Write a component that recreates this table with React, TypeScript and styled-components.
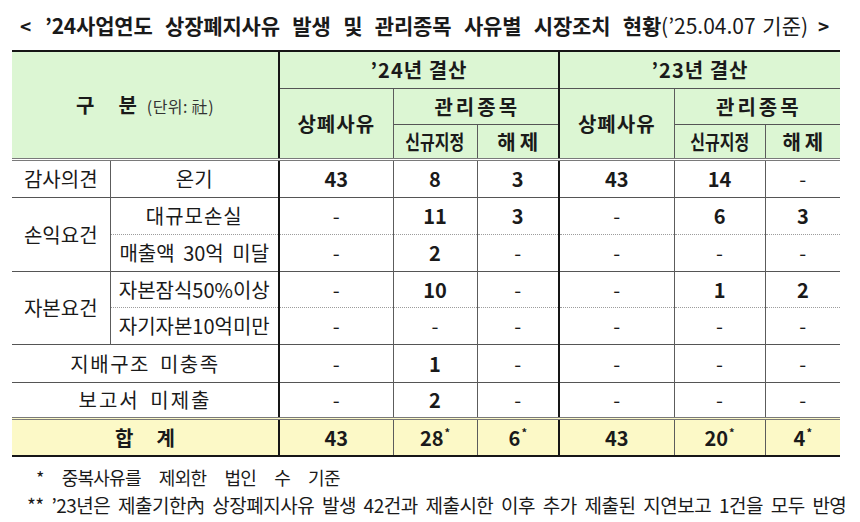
import styled, { createGlobalStyle } from "styled-components";

type Edge = "thick" | "thin" | "none";
type Line = "solid" | "dotted" | "double" | "none";

const edges: Record<Edge, string> = {
    thick: "2px solid #161616",
    thin: "1px solid #5c5c5c",
    none: "none",
};

const lines: Record<Line, string> = {
    solid: "1px solid #555555",
    dotted: "1px dotted #9c9c9c",
    double: "3px double #7a7a7a",
    none: "none",
};

const GlobalStyle = createGlobalStyle`
    html, body {
        margin: 0;
        padding: 0;
        background: #ffffff;
    }
    body {
        font-family: "Noto Sans CJK KR", "Noto Sans", sans-serif;
        color: #1a1a1a;
    }
`;

const Page = styled.div`
    width: 860px;
    height: 522px;
    box-sizing: border-box;
    padding-left: 12px;
    overflow: hidden;
`;

const Title = styled.h1`
    margin: 0;
    height: 50px;
    display: flex;
    align-items: center;
    padding-left: 8px;
    font-size: 21px;
    font-weight: 700;
    letter-spacing: -0.2px;
    word-spacing: 8px;
    white-space: nowrap;
    color: #1a1a1a;
`;

const TitleNote = styled.span`
    font-weight: 400;
    letter-spacing: 0;
    word-spacing: 2px;
`;

const Arrow = styled.span<{ $side: "left" | "right" }>`
    font-weight: 700;
    font-size: 19px;
    margin: ${p => (p.$side === "left" ? "0 14px 0 0" : "0 0 0 10px")};
`;

const Table = styled.table`
    width: 828px;
    border-collapse: collapse;
    table-layout: fixed;
    border-top: 2px solid #161616;
    border-bottom: 2px solid #161616;
`;

const Row = styled.tr<{ $h: number }>`
    height: ${p => p.$h}px;
`;

const HeadCell = styled.th<{ $left?: Edge; $top?: Line }>`
    padding: 0;
    background: #dcf6d3;
    font-size: 20px;
    font-weight: 700;
    text-align: center;
    vertical-align: middle;
    letter-spacing: 1px;
    white-space: nowrap;
    border-left: ${p => edges[p.$left ?? "none"]};
    border-top: ${p => lines[p.$top ?? "none"]};
    border-bottom: none;
`;

const Unit = styled.span`
    font-size: 16px;
    font-weight: 400;
    letter-spacing: 0.4px;
    color: #333333;
    margin-left: 10px;
`;

const Spaced = styled.span<{ $gap: number }>`
    display: inline-flex;
    gap: ${p => p.$gap}px;
    letter-spacing: 0;
`;

const Spread = styled.span<{ $gap: number }>`
    letter-spacing: ${p => p.$gap}px;
    margin-right: -${p => p.$gap}px;
`;

const Narrow = styled.span`
    display: inline-block;
    letter-spacing: 0;
    transform: scaleX(0.8);
`;

const BodyCell = styled.td<{ $left?: Edge; $top?: Line; $bold?: boolean; $spacing?: number }>`
    padding: 0;
    font-size: 20px;
    font-weight: ${p => (p.$bold ? 700 : 400)};
    letter-spacing: ${p => p.$spacing ?? 0}px;
    word-spacing: 4px;
    text-align: center;
    vertical-align: middle;
    white-space: nowrap;
    border-left: ${p => edges[p.$left ?? "none"]};
    border-top: ${p => lines[p.$top ?? "none"]};
`;

const TotalCell = styled.td<{ $left?: Edge }>`
    padding: 0;
    background: #fcf9c7;
    font-size: 20px;
    font-weight: 700;
    text-align: center;
    vertical-align: middle;
    white-space: nowrap;
    border-left: ${p => edges[p.$left ?? "none"]};
    border-top: 3px double #7a7a7a;
`;

const Star = styled.sup`
    font-size: 11px;
    vertical-align: 9px;
    line-height: 0;
    margin-left: 1px;
`;

const Notes = styled.div`
    padding-top: 7px;
`;

const Note = styled.p<{ $indent: number; $words: number; $size: number; $track: number }>`
    margin: 0;
    height: 27px;
    line-height: 27px;
    padding-left: ${p => p.$indent}px;
    font-size: ${p => p.$size}px;
    letter-spacing: ${p => p.$track}px;
    word-spacing: ${p => p.$words}px;
    white-space: nowrap;
    color: #1a1a1a;
`;

interface BodyRow {
    group?: string;
    groupSpan?: number;
    full?: boolean;
    label: string;
    spacing?: number;
    vals: string[];
    h: number;
}

const rows: BodyRow[] = [
    { group: "감사의견", groupSpan: 1, label: "온기", vals: ["43", "8", "3", "43", "14", "-"], h: 38 },
    { group: "손익요건", groupSpan: 2, label: "대규모손실", spacing: 1, vals: ["-", "11", "3", "-", "6", "3"], h: 37 },
    { label: "매출액 30억 미달", vals: ["-", "2", "-", "-", "-", "-"], h: 37 },
    { group: "자본요건", groupSpan: 2, label: "자본잠식50%이상", vals: ["-", "10", "-", "-", "1", "2"], h: 36 },
    { label: "자기자본10억미만", vals: ["-", "-", "-", "-", "-", "-"], h: 37 },
    { full: true, label: "지배구조 미충족", spacing: 1.5, vals: ["-", "1", "-", "-", "-", "-"], h: 38 },
    { full: true, label: "보고서 미제출", spacing: 2, vals: ["-", "2", "-", "-", "-", "-"], h: 36 },
];

const totals = ["43", "28*", "6*", "43", "20*", "4*"];

// value columns: '24 상폐사유 | 신규지정 | 해제 | '23 상폐사유 | 신규지정 | 해제
const valueEdges: Edge[] = ["thick", "thin", "thin", "thick", "thin", "thin"];

const colWidths = [98, 169, 114, 84, 82, 115, 91, 75];

const Value = ({ v }: { v: string }) => {
    if (v.endsWith("*")) {
        return (
            <>
                {v.slice(0, -1)}
                <Star>*</Star>
            </>
        );
    }
    return <>{v}</>;
};

const App = () => {
    return (
        <Page>
            <GlobalStyle />
            <Title>
                <Arrow $side="left">&lt;</Arrow>
                ’24사업연도 상장폐지사유 발생 및 관리종목 사유별 시장조치 현황
                <TitleNote>(’25.04.07 기준)</TitleNote>
                <Arrow $side="right">&gt;</Arrow>
            </Title>

            <Table>
                <colgroup>
                    {colWidths.map((w, i) => (
                        <col key={i} style={{ width: w }} />
                    ))}
                </colgroup>
                <thead>
                    <Row $h={37}>
                        <HeadCell colSpan={2} rowSpan={3}>
                            <Spaced $gap={24}>
                                <span>구</span>
                                <span>분</span>
                            </Spaced>
                            <Unit>(단위: 社)</Unit>
                        </HeadCell>
                        <HeadCell colSpan={3} $left="thick">
                            ’24년 결산
                        </HeadCell>
                        <HeadCell colSpan={3} $left="thick">
                            ’23년 결산
                        </HeadCell>
                    </Row>
                    <Row $h={36}>
                        <HeadCell rowSpan={2} $left="thick" $top="solid">
                            상폐사유
                        </HeadCell>
                        <HeadCell colSpan={2} $left="thin" $top="solid">
                            <Spread $gap={3}>관리종목</Spread>
                        </HeadCell>
                        <HeadCell rowSpan={2} $left="thick" $top="solid">
                            상폐사유
                        </HeadCell>
                        <HeadCell colSpan={2} $left="thin" $top="solid">
                            <Spread $gap={3}>관리종목</Spread>
                        </HeadCell>
                    </Row>
                    <Row $h={35}>
                        <HeadCell $left="thin" $top="solid">
                            <Narrow>신규지정</Narrow>
                        </HeadCell>
                        <HeadCell $left="thin" $top="solid">
                            <Spread $gap={4}>해제</Spread>
                        </HeadCell>
                        <HeadCell $left="thin" $top="solid">
                            <Narrow>신규지정</Narrow>
                        </HeadCell>
                        <HeadCell $left="thin" $top="solid">
                            <Spread $gap={4}>해제</Spread>
                        </HeadCell>
                    </Row>
                </thead>
                <tbody>
                    {rows.map((r, i) => {
                        const first = i === 0;
                        const sub = !r.group && !r.full;
                        const top: Line = first ? "double" : sub ? "dotted" : "solid";
                        return (
                            <Row key={r.label} $h={r.h}>
                                {r.group && (
                                    <BodyCell rowSpan={r.groupSpan} $top={top}>
                                        {r.group}
                                    </BodyCell>
                                )}
                                <BodyCell
                                    colSpan={r.full ? 2 : 1}
                                    $left={r.full ? "none" : "thin"}
                                    $top={top}
                                    $spacing={r.spacing}
                                >
                                    {r.label}
                                </BodyCell>
                                {r.vals.map((v, j) => (
                                    <BodyCell key={j} $left={valueEdges[j]} $top={top} $bold={v !== "-"}>
                                        {v}
                                    </BodyCell>
                                ))}
                            </Row>
                        );
                    })}
                    <Row $h={38}>
                        <TotalCell colSpan={2}>
                            <Spaced $gap={23}>
                                <span>합</span>
                                <span>계</span>
                            </Spaced>
                        </TotalCell>
                        {totals.map((v, j) => (
                            <TotalCell key={j} $left={valueEdges[j]}>
                                <Value v={v} />
                            </TotalCell>
                        ))}
                    </Row>
                </tbody>
            </Table>

            <Notes>
                <Note $indent={24} $words={15} $size={18} $track={-0.8}>
                    * 중복사유를 제외한 법인 수 기준
                </Note>
                <Note $indent={15} $words={4} $size={19} $track={-0.5}>
                    ** ’23년은 제출기한內 상장폐지사유 발생 42건과 제출시한 이후 추가 제출된 지연보고 1건을 모두 반영
                </Note>
            </Notes>
        </Page>
    );
};

export default App;
